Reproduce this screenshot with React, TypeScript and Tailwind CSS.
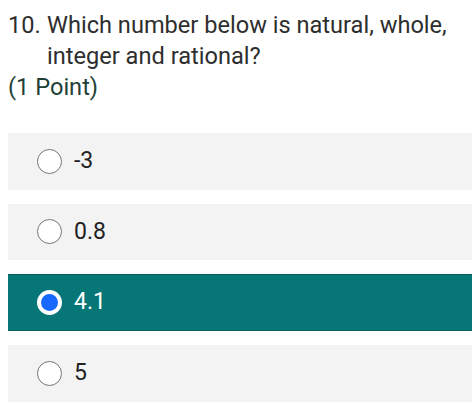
export default function App() {
  const options = ["-3", "0.8", "4.1", "5"];
  const selected = 2;
  return (
    <div className="w-[474px] h-[402px] bg-white overflow-hidden font-['Roboto',sans-serif]">
      <div className="pl-2 pt-[10px] pr-2 text-[23.6px] leading-[31px] text-[#2e2e2e]">
        <div className="flex">
          <span className="w-[39px] shrink-0">10.</span>
          <span>Which number below is natural, whole, integer and rational?</span>
        </div>
        <div className="text-[#1f3f38]">(1 Point)</div>
      </div>
      <div className="flex flex-col gap-[14.2px] pl-2 pr-[2px] mt-[30px]">
        {options.map((o, i) =>
          i === selected ? (
            <div
              key={o}
              className="h-[56.5px] bg-[#077677] border-y border-[#0b5e5d] flex items-center pl-[29px] gap-[12px]"
            >
              <span className="w-[25px] h-[25px] rounded-full bg-[#1769ff] border-[4px] border-white" />
              <span className="text-[23px] text-white">{o}</span>
            </div>
          ) : (
            <div key={o} className="h-[56.5px] bg-[#f3f3f3] flex items-center pl-[29px] gap-[12px]">
              <span className="w-[25px] h-[25px] rounded-full bg-white border-[1.5px] border-[#767676]" />
              <span className="text-[23px] text-[#222]">{o}</span>
            </div>
          )
        )}
      </div>
    </div>
  );
}
